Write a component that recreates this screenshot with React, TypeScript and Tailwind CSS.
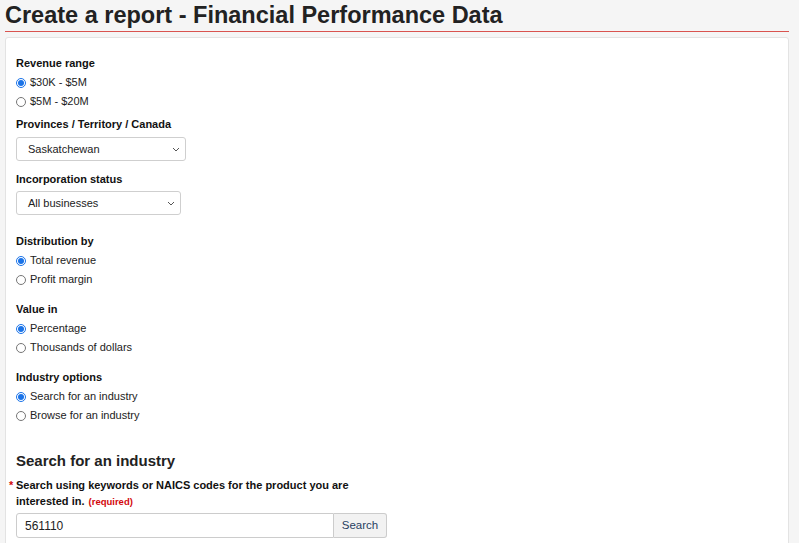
import React from "react";

const font = { fontFamily: '"Liberation Sans", Arial, Helvetica, sans-serif' };

interface RadioGroupProps {
  name: string;
  label: string;
  options: string[];
  checked: number;
}

const RadioGroup = ({ name, label, options, checked }: RadioGroupProps) => (
  <fieldset>
    <legend className="text-[11px] font-bold text-[#111] leading-[15px] mb-[4px]">{label}</legend>
    <div className="flex flex-col gap-[4px]">
      {options.map((opt, i) => (
        <label key={opt} className="flex items-center gap-[4px] text-[11px] text-[#222] leading-[15px]">
          <input
            type="radio"
            name={name}
            defaultChecked={i === checked}
            className="w-[10px] h-[10px] m-0 accent-[#1a73e8]"
          />
          {opt}
        </label>
      ))}
    </div>
  </fieldset>
);

const Chevron = () => (
  <svg width="8" height="5" viewBox="0 0 8 5" className="text-[#555]">
    <path d="M1 1l3 3 3-3" fill="none" stroke="currentColor" strokeWidth="1" />
  </svg>
);

const Select = ({ value, width }: { value: string; width: string }) => (
  <div
    className={`${width} h-[24px] bg-white border border-[#cfcfcf] rounded-[3px] flex items-center justify-between pl-[11px] pr-[5px] text-[11px] text-[#222]`}
  >
    <span>{value}</span>
    <Chevron />
  </div>
);

export default function App() {
  return (
    <div className="min-h-[543px] bg-[#f5f5f5] pl-[5px] pr-[10px] pt-[2px]" style={font}>
      <h1 className="text-[23.5px] font-bold text-[#222] leading-[26px] pb-[3px] border-b border-[#d9534f]">
        Create a report - Financial Performance Data
      </h1>
      <div className="mt-[5px] bg-white border border-[#e3e3e3] rounded-[3px] pl-[10px] pt-[18px] pb-[10px] h-[520px]">
        <div className="flex flex-col">
          <RadioGroup name="rev" label="Revenue range" options={["$30K - $5M", "$5M - $20M"]} checked={0} />
          <div className="mt-[8px] text-[11px] font-bold text-[#111] leading-[15px]">Provinces / Territory / Canada</div>
          <div className="mt-[5px]">
            <Select value="Saskatchewan" width="w-[170px]" />
          </div>
          <div className="mt-[11px] text-[11px] font-bold text-[#111] leading-[15px]">Incorporation status</div>
          <div className="mt-[4px]">
            <Select value="All businesses" width="w-[165px]" />
          </div>
          <div className="mt-[19px]">
            <RadioGroup name="dist" label="Distribution by" options={["Total revenue", "Profit margin"]} checked={0} />
          </div>
          <div className="mt-[15px]">
            <RadioGroup name="val" label="Value in" options={["Percentage", "Thousands of dollars"]} checked={0} />
          </div>
          <div className="mt-[15px]">
            <RadioGroup
              name="ind"
              label="Industry options"
              options={["Search for an industry", "Browse for an industry"]}
              checked={0}
            />
          </div>
          <h2 className="mt-[28px] text-[15px] font-bold text-[#222] leading-[20px]">Search for an industry</h2>
          <div className="relative mt-[6px] text-[11px] font-bold text-[#111] leading-[16px] w-[345px]">
            <span className="absolute left-[-7px] top-[0px] text-[#d3080c]">*</span>
            Search using keywords or NAICS codes for the product you are interested in.{" "}
            <span className="ml-[1px] text-[9.5px] text-[#d3080c]">(required)</span>
          </div>
          <div className="mt-[3px] flex">
            <div className="w-[318px] h-[25px] bg-white border border-[#ccc] rounded-l-[3px] flex items-center pl-[8px] text-[12px] text-[#222]">
              561110
            </div>
            <button className="w-[53px] h-[25px] bg-[#f2f2f2] border border-l-0 border-[#ccc] rounded-r-[3px] text-[11.5px] text-[#284162]">
              Search
            </button>
          </div>
        </div>
      </div>
    </div>
  );
}
